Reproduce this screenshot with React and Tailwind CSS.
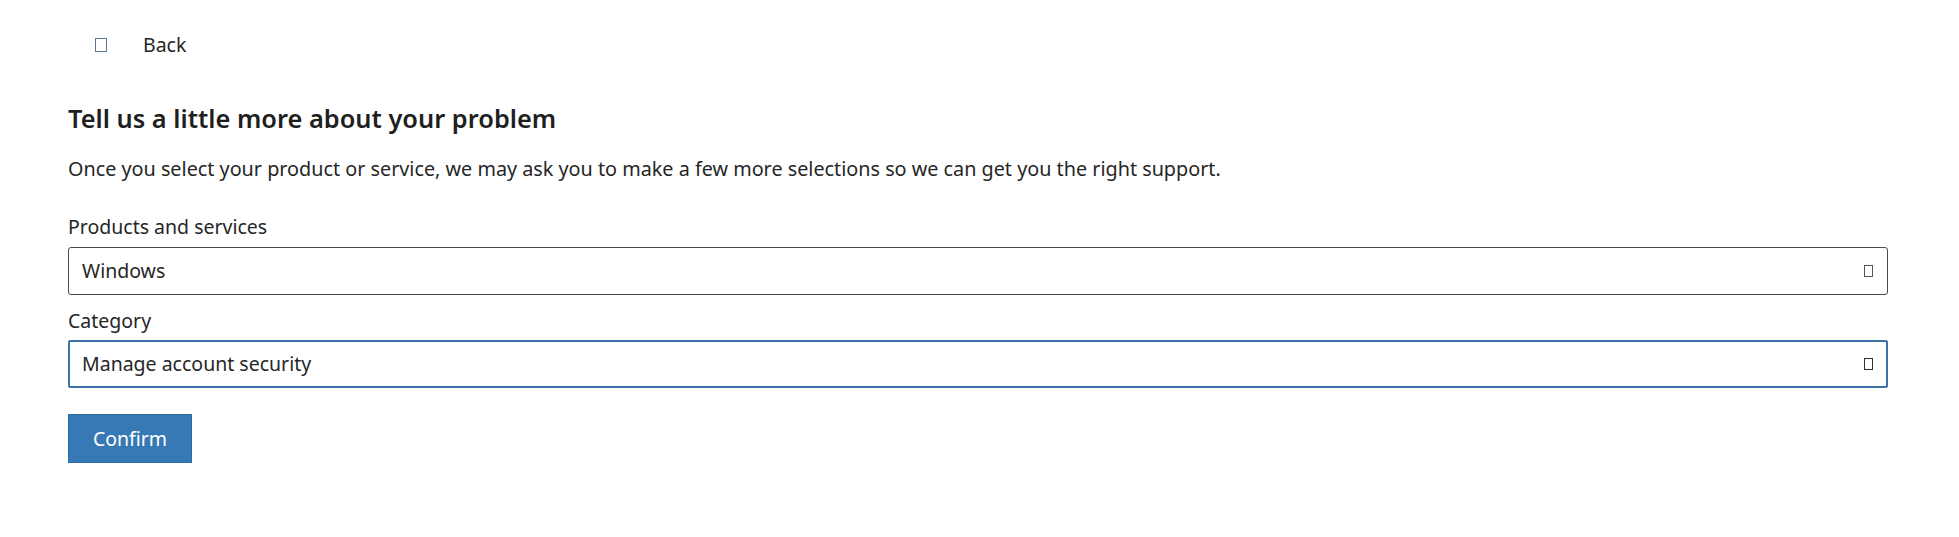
export default function App() {
  const font = { fontFamily: '"Noto Sans", "Open Sans", sans-serif' };
  return (
    <div className="min-h-[537px] bg-white text-[#262626]" style={font}>
      <div className="px-[68px] pt-[28px]">
        <button type="button" className="flex h-[34px] items-center text-[19.5px] text-[#262626]">
          <span className="ml-[27px] mr-[36px] inline-block h-[14px] w-[12px] border border-[#5a7896]" />
          <span>Back</span>
        </button>

        <h1 className="mt-[39px] text-[25.4px] font-semibold leading-[34px] text-[#1f1f1f]">
          Tell us a little more about your problem
        </h1>
        <p className="mt-[20px] text-[19.8px] leading-[28px]">
          Once you select your product or service, we may ask you to make a few more selections so we can get you the right support.
        </p>

        <label className="mt-[30px] block text-[19.5px] leading-[28px]">Products and services</label>
        <div className="mt-[6px] flex h-[48px] w-[1820px] items-center justify-between rounded-[3px] border border-[#4a4a4a] pl-[13px] pr-[14px] text-[19.5px]">
          <span>Windows</span>
          <span className="inline-block h-[12px] w-[9px] border border-[#555]" />
        </div>

        <label className="mt-[12px] block text-[19.5px] leading-[28px]">Category</label>
        <div className="mt-[5px] flex h-[48px] w-[1820px] items-center justify-between rounded-[2px] border-2 border-[#3a73a8] pl-[12px] pr-[13px] text-[19.5px]">
          <span>Manage account security</span>
          <span className="inline-block h-[12px] w-[9px] border border-[#333]" />
        </div>

        <button
          type="button"
          className="mt-[26px] h-[49px] w-[124px] border border-[#2f6aa0] bg-[#3779b5] text-[19.5px] text-white"
        >
          Confirm
        </button>
      </div>
    </div>
  );
}
